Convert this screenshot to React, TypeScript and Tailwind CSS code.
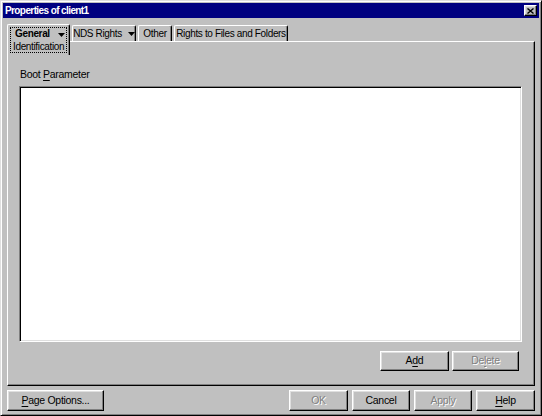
import React from 'react';

const font = "font-['Liberation_Sans',Arial,sans-serif]";
const txt = 'text-[10.5px] tracking-[-0.3px] whitespace-nowrap';
const tabTxt = 'text-[10px] tracking-[-0.35px] whitespace-nowrap';

// raised 3D edge like a Win9x button
const raised =
  'border border-t-white border-l-white border-r-black border-b-black shadow-[inset_-1px_-1px_0_#808080,inset_1px_1px_0_#dfdfdf]';

function Btn({ children, w, disabled }: { children: React.ReactNode; w: string; disabled?: boolean }) {
  return (
    <div
      className={`${raised} ${w} h-full bg-[#c0c0c0] flex items-center justify-center ${txt} ${
        disabled ? 'text-[#808080] [text-shadow:1px_1px_0_#fff]' : 'text-black'
      }`}
    >
      {children}
    </div>
  );
}

function Arrow({ ml = 'ml-[6px]' }: { ml?: string }) {
  return (
    <svg width="7" height="4" viewBox="0 0 7 4" className={`${ml} mt-[1px] shrink-0`}>
      <path d="M0 0h7L3.5 4z" fill="black" />
    </svg>
  );
}

function Tab({ children, w }: { children: React.ReactNode; w: string }) {
  return (
    <div
      className={`${w} h-[16px] mt-[1px] ml-[2px] bg-[#c0c0c0] border-t border-l border-r border-t-white border-l-white border-r-black rounded-t-[2px] shadow-[inset_-1px_0_0_#808080] flex items-center justify-center ${tabTxt} text-black`}
    >
      {children}
    </div>
  );
}

export default function App() {
  return (
    <div
      className={`${font} w-[542px] h-[416px] bg-[#c0c0c0] border border-t-[#dfdfdf] border-l-[#dfdfdf] border-r-black border-b-black shadow-[inset_1px_1px_0_#fff,inset_-1px_-1px_0_#808080] p-[2px] flex flex-col`}
    >
      {/* Title bar */}
      <div className="h-[15px] bg-[#000080] flex items-center justify-between pl-[2px] pr-[2px]">
        <span className="text-white text-[10px] tracking-[-0.6px] font-bold leading-none whitespace-nowrap">
          Properties of client1
        </span>
        <div className={`${raised} w-[13px] h-[11px] bg-[#c0c0c0] flex items-center justify-center`}>
          <svg width="7" height="6" viewBox="0 0 7 6">
            <path d="M0.5 0.5L6.5 5.5M6.5 0.5L0.5 5.5" stroke="black" strokeWidth="1.4" />
          </svg>
        </div>
      </div>

      <div className="flex flex-col flex-1 px-[4px] pt-[6px]">
        {/* Tabs */}
        <div className="flex items-start h-[17px]">
          <div className="relative z-10 w-[63px] h-[31px] mb-[-14px] bg-[#c0c0c0] border-t border-l border-r border-t-white border-l-white border-r-black rounded-t-[2px] shadow-[inset_-1px_0_0_#808080] px-[2px] pt-[2px]">
            <div className={`h-[26px] border border-dotted border-black flex flex-col pl-[2px] ${tabTxt} text-black leading-[12px]`}>
              <div className="flex items-center font-bold pl-[2px]">
                General
                <Arrow ml="ml-[8px]" />
              </div>
              <div className="mt-[1px]">Identification</div>
            </div>
          </div>
          <Tab w="w-[64px]">
            NDS Rights
            <Arrow />
          </Tab>
          <Tab w="w-[34px]">Other</Tab>
          <Tab w="w-[114px]">Rights to Files and Folders</Tab>
        </div>

        {/* Panel */}
        <div className="h-[345px] border border-t-white border-l-white border-r-black border-b-black shadow-[inset_-1px_-1px_0_#808080] pl-[11px] pr-[12px] flex flex-col">
          <div className={`mt-[26px] h-[13px] ${txt} text-black leading-[13px] pl-[1px]`}>
            Boot <u className="underline-offset-2">P</u>arameter
          </div>
          <div className="mt-[5px] h-[256px] bg-white border border-t-[#808080] border-l-[#808080] border-r-white border-b-white shadow-[inset_1px_1px_0_#000,inset_-1px_-1px_0_#dfdfdf]" />
          <div className="mt-[9px] h-[20px] flex justify-end gap-[3px] pr-[3px]">
            <Btn w="w-[69px]">
              A<u className="underline-offset-2">d</u>d
            </Btn>
            <Btn w="w-[67px]" disabled>
              De<u className="underline-offset-2">l</u>ete
            </Btn>
          </div>
        </div>

        {/* Bottom buttons */}
        <div className="mt-[4px] h-[21px] flex">
          <Btn w="w-[97px]">
            <u className="underline-offset-2">P</u>age Options...
          </Btn>
          <div className="flex-1" />
          <div className="flex gap-[4px] h-full">
            <Btn w="w-[59px]" disabled>
              OK
            </Btn>
            <Btn w="w-[58px]">Cancel</Btn>
            <Btn w="w-[58px]" disabled>
              Apply
            </Btn>
            <Btn w="w-[59px]">
              <u className="underline-offset-2">H</u>elp
            </Btn>
          </div>
        </div>
      </div>
    </div>
  );
}
